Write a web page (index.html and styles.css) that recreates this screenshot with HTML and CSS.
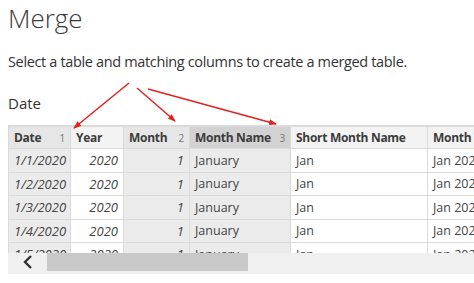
FILE: index.html
```html
<!DOCTYPE html>
<html lang="en">
<head>
  <meta charset="UTF-8" />
  <title>Merge</title>
  <link rel="stylesheet" href="styles.css">
</head>
<body>
  <div class="pagina">
    <h1 class="titulo">Merge</h1>
    <p class="descripcion">Select a table and matching columns to create a merged table.</p>
    <div class="nombre-tabla">Date</div>

    <div class="tabla-caja">
      <div class="tabla-vista">
        <table class="datos">
          <colgroup>
            <col class="c-date"><col class="c-year"><col class="c-month"><col class="c-mname"><col class="c-short"><col class="c-mly">
          </colgroup>
          <thead>
            <tr>
              <th class="sel"><div class="cab">Date <span class="orden">1</span></div></th>
              <th><div class="cab">Year</div></th>
              <th class="sel"><div class="cab">Month <span class="orden">2</span></div></th>
              <th class="sel activo"><div class="cab">Month Name <span class="orden">3</span></div></th>
              <th><div class="cab">Short Month Name</div></th>
              <th><div class="cab">Month Year</div></th>
            </tr>
          </thead>
          <tbody>
            <tr><td class="sel num">1/1/2020</td><td class="num">2020</td><td class="sel num">1</td><td class="sel">January</td><td>Jan</td><td>Jan 2020</td></tr>
            <tr><td class="sel num">1/2/2020</td><td class="num">2020</td><td class="sel num">1</td><td class="sel">January</td><td>Jan</td><td>Jan 2020</td></tr>
            <tr><td class="sel num">1/3/2020</td><td class="num">2020</td><td class="sel num">1</td><td class="sel">January</td><td>Jan</td><td>Jan 2020</td></tr>
            <tr><td class="sel num">1/4/2020</td><td class="num">2020</td><td class="sel num">1</td><td class="sel">January</td><td>Jan</td><td>Jan 2020</td></tr>
            <tr><td class="sel num">1/5/2020</td><td class="num">2020</td><td class="sel num">1</td><td class="sel">January</td><td>Jan</td><td>Jan 2020</td></tr>
          </tbody>
        </table>
      </div>
      <div class="scroll">
        <div class="scroll-btn">
          <svg width="12" height="14" viewBox="0 0 12 14"><path d="M9 1 L3 7 L9 13" fill="none" stroke="#333" stroke-width="2.4"/></svg>
        </div>
        <div class="scroll-thumb"></div>
      </div>
    </div>
  </div>

  <!-- flechas rojas sobre la tabla -->
  <svg class="flechas" width="474" height="283" viewBox="0 0 474 283">
    <defs>
      <marker id="punta" markerWidth="8" markerHeight="6" refX="7" refY="3" orient="auto" markerUnits="userSpaceOnUse">
        <path d="M0 0 L8 3 L0 6 Z" fill="#e3211d"/>
      </marker>
    </defs>
    <line x1="129" y1="83" x2="74" y2="128" stroke="#e3211d" stroke-width="1.5" marker-end="url(#punta)"/>
    <line x1="137" y1="88" x2="175" y2="121" stroke="#e3211d" stroke-width="1.5" marker-end="url(#punta)"/>
    <line x1="148" y1="89" x2="276" y2="124" stroke="#e3211d" stroke-width="1.5" marker-end="url(#punta)"/>
  </svg>
</body>
</html>
```

FILE: styles.css
```css
body {
  margin: 0;
  background: #fff;
  font-family: "Open Sans", Arial, sans-serif;
  color: #333;
  overflow: hidden;
}
.pagina {
  padding-left: 8px;
  display: flex;
  flex-direction: column;
}
.titulo {
  margin: 2px 0 0;
  font-size: 26px;
  font-weight: 300;
  line-height: 32px;
  color: #3a3a3a;
}
.descripcion {
  margin: 18px 0 0;
  font-size: 14.5px;
  line-height: 20px;
  letter-spacing: -0.35px;
}
.nombre-tabla {
  margin-top: 21px;
  font-size: 15px;
  line-height: 20px;
}
.tabla-caja {
  margin-top: 12px;
  width: 466px;
  border-top: 1px solid #dcdcdc;
  border-bottom: 3px solid #f0f0f0;
}
.tabla-vista {
  height: 127px;
  overflow: hidden;
}
.datos {
  border-collapse: collapse;
  table-layout: fixed;
  width: 520px;
  font-size: 12.5px;
}
.c-date { width: 62px; }
.c-year { width: 53px; }
.c-month { width: 66px; }
.c-mname { width: 101px; }
.c-short { width: 137px; }
.c-mly { width: 101px; }
.datos th, .datos td {
  border: 1px solid #dadada;
  padding: 0 5px;
  white-space: nowrap;
  overflow: hidden;
  text-align: left;
}
.datos th {
  height: 21px;
  background: #f3f3f3;
  font-size: 12px;
  font-weight: 700;
  color: #3c3c3c;
  letter-spacing: -0.3px;
}
.cab {
  display: flex;
  justify-content: space-between;
  align-items: center;
}
.datos th.sel { background: #e6e6e6; }
.datos th.activo { background: #d2d2d2; }
.orden {
  font-size: 10px;
  font-weight: 400;
  color: #777;
}
.datos td {
  height: 22.5px;
  background: #fff;
  color: #444;
}
.datos td.sel { background: #ebebeb; }
.datos td.num {
  text-align: right;
  font-style: italic;
  font-size: 13px;
}
.scroll {
  display: flex;
  height: 18px;
  background: #f0f0f0;
}
.scroll-btn {
  width: 39px;
  display: flex;
  align-items: center;
  justify-content: center;
}
.scroll-thumb {
  width: 201px;
  background: #c8c8c8;
}
.flechas {
  position: absolute;
  left: 0;
  top: 0;
  pointer-events: none;
}
```
